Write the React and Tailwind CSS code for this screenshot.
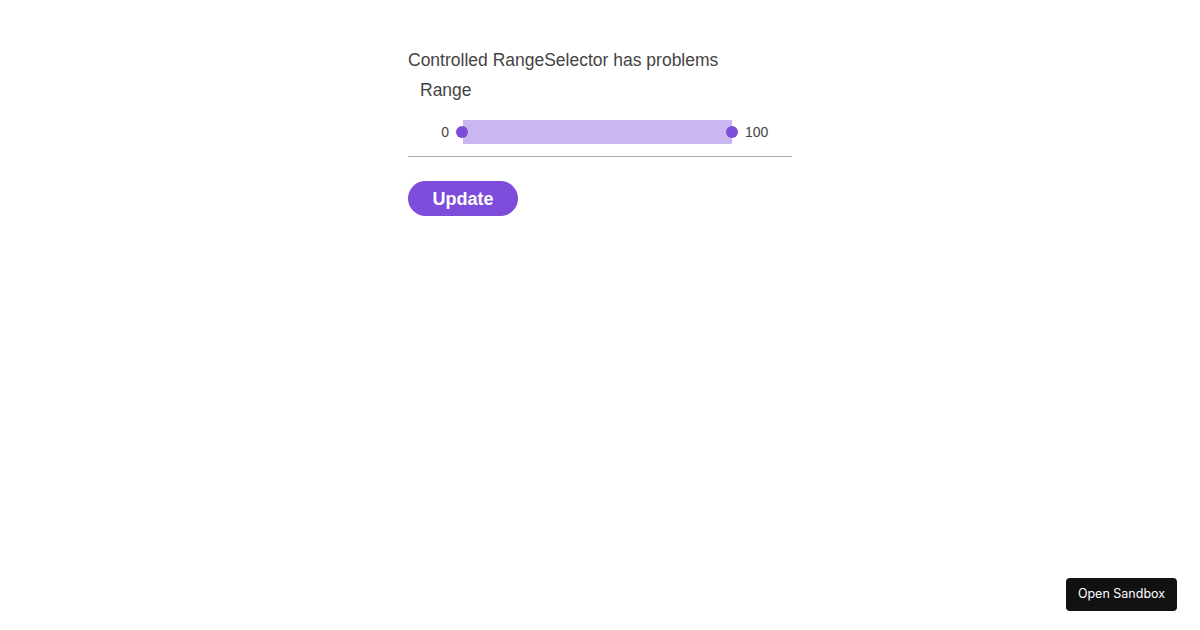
export default function App() {
  return (
    <div className="relative w-[1200px] h-[630px] bg-white" style={{ fontFamily: '"Liberation Sans", Arial, sans-serif' }}>
      <div className="mx-auto w-[384px] pt-[48px] text-[#444]">
        <div className="text-[17.5px] leading-[24px]">Controlled RangeSelector has problems</div>
        <div className="border-b border-[#aaa]">
          <div className="px-[12px] pt-[6px] text-[17.5px] leading-[24px]">Range</div>
          <div className="flex items-center px-[12px] pt-[18px] pb-[12px]">
            <div className="w-[36px] pr-[7px] text-right text-[14px] leading-[24px]">0</div>
            <div className="flex items-center w-[282px] h-[24px]">
              <div className="relative z-10 w-[12px] h-[12px] shrink-0 rounded-full bg-[#7d4cdb]" />
              <div className="flex-1 h-[24px] -ml-[5px] -mr-[6px] bg-[#cab7f1]" />
              <div className="relative z-10 w-[12px] h-[12px] shrink-0 rounded-full bg-[#7d4cdb]" />
            </div>
            <div className="pl-[7px] text-[14px] leading-[24px]">100</div>
          </div>
        </div>
        <button className="mt-[24px] h-[35px] w-[110px] rounded-full bg-[#7d4cdb] text-white font-bold text-[18px] leading-[24px]">
          Update
        </button>
      </div>
      <div
        className="absolute right-[23px] bottom-[19px] w-[111px] h-[33px] rounded-[4px] bg-[#111] text-white text-[12.5px] flex items-center justify-center"
        style={{ fontFamily: 'Inter, sans-serif' }}
      >
        Open Sandbox
      </div>
    </div>
  );
}
